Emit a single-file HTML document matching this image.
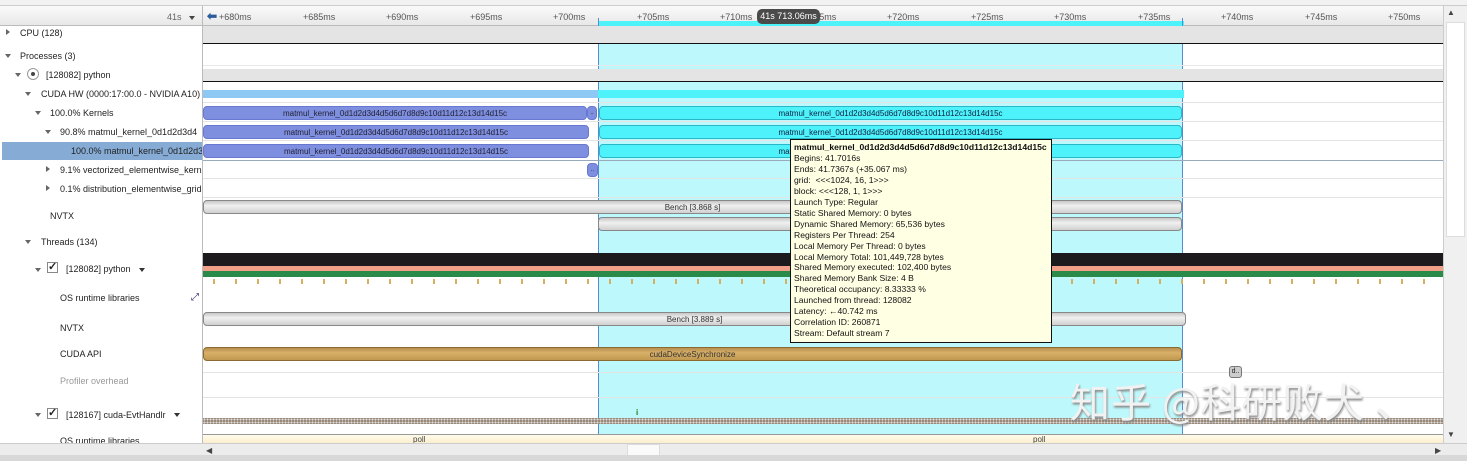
<!DOCTYPE html>
<html><head><meta charset="utf-8"><style>
*{margin:0;padding:0;box-sizing:border-box}
body{width:1467px;height:461px;overflow:hidden;background:#fff;font-family:"Liberation Sans",sans-serif;position:relative;color:#222}
.a{position:absolute}
.lbl{position:absolute;font-size:9px;white-space:nowrap;color:#222;line-height:12px}
.tri{position:absolute;width:0;height:0;border-left:3px solid transparent;border-right:3px solid transparent;border-top:4px solid #666}
.trr{position:absolute;width:0;height:0;border-top:3px solid transparent;border-bottom:3px solid transparent;border-left:4px solid #666}
.bar{position:absolute;border-radius:4px;font-size:8px;text-align:center;line-height:13px;color:#333;white-space:nowrap;overflow:hidden}
.pu{background:#7f8fe0;border:1px solid #6878d0;color:#223}
.cy{background:#4ef2fa;border:1px solid #2ab8c8;color:#124}
.gr{background:linear-gradient(#c8c8c8,#f0f0f0 40%,#d0d0d0);border:1px solid #888;color:#333}
.tk{position:absolute;font-size:9px;color:#555;white-space:nowrap}
.cb{position:absolute;width:11px;height:11px;border:1px solid #888;background:#fff;font-size:11px;line-height:9px;text-align:center;font-weight:bold}
</style></head><body>
<div class="a" style="left:0;top:0;width:1467px;height:6px;background:#f2f2f2;border-bottom:1px solid #ccc"></div>
<div class="a" style="left:0;top:6px;width:1443px;height:20px;background:linear-gradient(#fafafa,#e8e8e8);border-bottom:1px solid #bbb"></div>
<div class="lbl" style="left:167px;top:11px;color:#666">41s</div>
<div class="tri" style="left:189px;top:16px;border-top-color:#444"></div>
<div class="a" style="left:202px;top:6px;width:1px;height:437px;background:#bbb"></div>
<div class="a" style="left:207px;top:12px;width:12px;height:8px;color:#2a5c9a;font-size:12px;line-height:8px;font-weight:bold">&#x2B05;</div>
<div class="tk" style="left:219px;top:12px">+680ms</div>
<div class="tk" style="left:303px;top:12px">+685ms</div>
<div class="tk" style="left:386px;top:12px">+690ms</div>
<div class="tk" style="left:470px;top:12px">+695ms</div>
<div class="tk" style="left:553px;top:12px">+700ms</div>
<div class="tk" style="left:637px;top:12px">+705ms</div>
<div class="tk" style="left:720px;top:12px">+710ms</div>
<div class="tk" style="left:804px;top:12px">+715ms</div>
<div class="tk" style="left:887px;top:12px">+720ms</div>
<div class="tk" style="left:971px;top:12px">+725ms</div>
<div class="tk" style="left:1054px;top:12px">+730ms</div>
<div class="tk" style="left:1138px;top:12px">+735ms</div>
<div class="tk" style="left:1221px;top:12px">+740ms</div>
<div class="tk" style="left:1305px;top:12px">+745ms</div>
<div class="tk" style="left:1388px;top:12px">+750ms</div>
<div class="a" style="left:598px;top:27px;width:584px;height:416px;background:#bdf9fc"></div>
<div class="a" style="left:598px;top:21px;width:586px;height:6px;background:#4ef2fa"></div>
<div class="a" style="left:598px;top:18px;width:1px;height:425px;background:#5a8ad0"></div>
<div class="a" style="left:1182px;top:18px;width:1px;height:425px;background:#5a8ad0"></div>
<div class="a" style="left:757px;top:9px;width:63px;height:15px;background:#4a4a4a;border-radius:5px;color:#fff;font-size:9px;line-height:15px;text-align:center">41s 713.06ms</div>
<div class="trr" style="left:6px;top:29px"></div><div class="lbl" style="left:20px;top:27px">CPU (128)</div>
<div class="tri" style="left:5px;top:54px"></div><div class="lbl" style="left:20px;top:50px">Processes (3)</div>
<div class="tri" style="left:15px;top:73px"></div><div class="a" style="left:27px;top:68px;width:12px;height:12px;border:1px solid #999;border-radius:50%;background:#fff"><div class="a" style="left:3px;top:3px;width:4px;height:4px;background:#444;border-radius:50%"></div></div><div class="lbl" style="left:46px;top:69px">[128082] python</div>
<div class="tri" style="left:25px;top:92px"></div><div class="lbl" style="left:41px;top:88px">CUDA HW (0000:17:00.0 - NVIDIA A10)</div>
<div class="tri" style="left:35px;top:111px"></div><div class="lbl" style="left:50px;top:107px">100.0% Kernels</div>
<div class="tri" style="left:45px;top:130px"></div><div class="lbl" style="left:60px;top:126px">90.8% matmul_kernel_0d1d2d3d4</div>
<div class="a" style="left:2px;top:142px;width:200px;height:18px;background:#86acd6"></div><div class="lbl" style="left:71px;top:145px;width:131px;overflow:hidden">100.0% matmul_kernel_0d1d2d3</div>
<div class="trr" style="left:46px;top:166px"></div><div class="lbl" style="left:60px;top:164px;width:142px;overflow:hidden">9.1% vectorized_elementwise_kerne</div>
<div class="trr" style="left:46px;top:185px"></div><div class="lbl" style="left:60px;top:183px;width:142px;overflow:hidden">0.1% distribution_elementwise_grid</div>
<div class="lbl" style="left:50px;top:210px">NVTX</div>
<div class="tri" style="left:25px;top:240px"></div><div class="lbl" style="left:41px;top:236px">Threads (134)</div>
<div class="tri" style="left:35px;top:268px"></div><div class="cb" style="left:47px;top:262px">&#10003;</div><div class="lbl" style="left:66px;top:263px">[128082] python</div><div class="tri" style="left:139px;top:268px;border-top-color:#333"></div>
<div class="lbl" style="left:60px;top:292px">OS runtime libraries</div><div class="a" style="left:191px;top:292px;font-size:10px;color:#1a1a6a">&#x2922;</div>
<div class="lbl" style="left:60px;top:322px">NVTX</div>
<div class="lbl" style="left:60px;top:348px">CUDA API</div>
<div class="lbl" style="left:60px;top:375px;color:#999">Profiler overhead</div>
<div class="tri" style="left:35px;top:413px"></div><div class="cb" style="left:47px;top:408px">&#10003;</div><div class="lbl" style="left:66px;top:409px">[128167] cuda-EvtHandlr</div><div class="tri" style="left:174px;top:413px;border-top-color:#333"></div>
<div class="lbl" style="left:60px;top:435px">OS runtime libraries</div>
<div class="a" style="left:203px;top:65px;width:1240px;height:1px;background:#e8e8e8"></div>
<div class="a" style="left:203px;top:102px;width:1240px;height:1px;background:#e4e4e4"></div>
<div class="a" style="left:203px;top:121px;width:1240px;height:1px;background:#e4e4e4"></div>
<div class="a" style="left:203px;top:140px;width:1240px;height:1px;background:#e4e4e4"></div>
<div class="a" style="left:203px;top:160px;width:1240px;height:1px;background:#9ab"></div>
<div class="a" style="left:203px;top:178px;width:1240px;height:1px;background:#e4e4e4"></div>
<div class="a" style="left:203px;top:197px;width:1240px;height:1px;background:#e4e4e4"></div>
<div class="a" style="left:203px;top:372px;width:1240px;height:1px;background:#e4e4e4"></div>
<div class="a" style="left:203px;top:397px;width:1240px;height:1px;background:#e4e4e4"></div>
<div class="a" style="left:203px;top:26px;width:1240px;height:18px;background:#e4e4e4;border-bottom:1px solid #111"></div>
<div class="a" style="left:203px;top:69px;width:1240px;height:13px;background:#e4e4e4;border-bottom:1px solid #111"></div>
<div class="a" style="left:203px;top:90px;width:395px;height:8px;background:#8ec8f4"></div>
<div class="a" style="left:598px;top:90px;width:586px;height:8px;background:#4ef2fa"></div>
<div class="bar pu" style="left:203px;top:106px;width:384px;height:14px">matmul_kernel_0d1d2d3d4d5d6d7d8d9c10d11d12c13d14d15c</div>
<div class="bar pu" style="left:587px;top:106px;width:10px;height:14px;font-size:6px">..</div>
<div class="bar cy" style="left:599px;top:106px;width:583px;height:14px">matmul_kernel_0d1d2d3d4d5d6d7d8d9c10d11d12c13d14d15c</div>
<div class="bar pu" style="left:203px;top:125px;width:386px;height:14px">matmul_kernel_0d1d2d3d4d5d6d7d8d9c10d11d12c13d14d15c</div>
<div class="bar cy" style="left:599px;top:125px;width:583px;height:14px">matmul_kernel_0d1d2d3d4d5d6d7d8d9c10d11d12c13d14d15c</div>
<div class="bar pu" style="left:203px;top:144px;width:386px;height:14px">matmul_kernel_0d1d2d3d4d5d6d7d8d9c10d11d12c13d14d15c</div>
<div class="bar cy" style="left:599px;top:144px;width:583px;height:14px">matmul_kernel_0d1d2d3d4d5d6d7d8d9c10d11d12c13d14d15c</div>
<div class="bar pu" style="left:587px;top:163px;width:11px;height:14px;font-size:6px">..</div>
<div class="bar gr" style="left:203px;top:200px;width:979px;height:14px">Bench [3.868 s]</div>
<div class="bar gr" style="left:598px;top:217px;width:584px;height:14px"></div>
<div class="a" style="left:203px;top:253px;width:1240px;height:13px;background:#1c1a1c"></div>
<div class="a" style="left:203px;top:266px;width:1240px;height:5px;background:#f0a088"></div>
<div class="a" style="left:203px;top:271px;width:1240px;height:6px;background:#2a8a4a"></div>
<div class="a" style="left:203px;top:279px;width:1240px;height:5px;background:repeating-linear-gradient(90deg,transparent 0 10px,#d4b060 10px 12px,transparent 12px 22px)"></div>
<div class="bar gr" style="left:203px;top:312px;width:983px;height:14px">Bench [3.889 s]</div>
<div class="bar" style="left:203px;top:347px;width:979px;height:14px;background:linear-gradient(#b89050,#d8b068 40%,#c09850);border:1px solid #8a6a30;color:#333">cudaDeviceSynchronize</div>
<div class="a" style="left:1229px;top:366px;width:13px;height:12px;background:#ccc;border:1px solid #777;border-radius:3px;font-size:7px;line-height:10px;text-align:center">d..</div>
<div class="a" style="left:636px;top:408px;font-size:8px;color:#1a7a1a;font-weight:bold">i</div>
<div class="a" style="left:203px;top:418px;width:1240px;height:6px;background:#9a8a7a;background-image:radial-gradient(#ddd 0.8px,transparent 1px);background-size:3px 3px"></div>
<div class="a" style="left:203px;top:434px;width:1240px;height:9px;background:linear-gradient(#fffbe8,#fbeed0);border-top:1px solid #999;font-size:8px;line-height:10px;color:#444"><span class="a" style="left:210px">poll</span><span class="a" style="left:830px">poll</span></div>
<div class="a" style="left:1070px;top:376px;font-family:'Noto Sans CJK SC',sans-serif;font-size:40px;line-height:48px;color:#f2f2f2;text-shadow:1px 2px 2px #888;letter-spacing:1px">知乎 @科研败犬 、</div>
<div class="a" style="left:790px;top:139px;width:262px;height:204px;background:#ffffe4;border:1px solid #111;font-size:8.6px;line-height:10.95px;padding:2px 3px;color:#111;white-space:nowrap">
<b>matmul_kernel_0d1d2d3d4d5d6d7d8d9c10d11d12c13d14d15c</b><br>Begins: 41.7016s<br>Ends: 41.7367s (+35.067 ms)<br>grid: &nbsp;&lt;&lt;&lt;1024, 16, 1&gt;&gt;&gt;<br>block: &lt;&lt;&lt;128, 1, 1&gt;&gt;&gt;<br>Launch Type: Regular<br>Static Shared Memory: 0 bytes<br>Dynamic Shared Memory: 65,536 bytes<br>Registers Per Thread: 254<br>Local Memory Per Thread: 0 bytes<br>Local Memory Total: 101,449,728 bytes<br>Shared Memory executed: 102,400 bytes<br>Shared Memory Bank Size: 4 B<br>Theoretical occupancy: 8.33333 %<br>Launched from thread: 128082<br>Latency: &#8592;40.742 ms<br>Correlation ID: 260871<br>Stream: Default stream 7</div>
<div class="a" style="left:1443px;top:6px;width:24px;height:437px;background:#f0f0f0;border-left:1px solid #ccc"></div>
<div class="a" style="left:1447px;top:8px;font-size:8px;color:#444">&#9650;</div>
<div class="a" style="left:1446px;top:22px;width:19px;height:215px;background:#fff;border:1px solid #ddd"></div>
<div class="a" style="left:1447px;top:430px;font-size:8px;color:#444">&#9660;</div>
<div class="a" style="left:0;top:443px;width:1467px;height:18px;background:#ececec;border-top:1px solid #ccc"></div>
<div class="a" style="left:206px;top:446px;font-size:8px;color:#444">&#9664;</div>
<div class="a" style="left:1435px;top:446px;font-size:8px;color:#444">&#9654;</div>
<div class="a" style="left:627px;top:444px;width:33px;height:14px;background:#fafafa;border:1px solid #ddd"></div>
<div class="a" style="left:0;top:455px;width:1467px;height:6px;background:#d8d8d8"></div>
</body></html>
